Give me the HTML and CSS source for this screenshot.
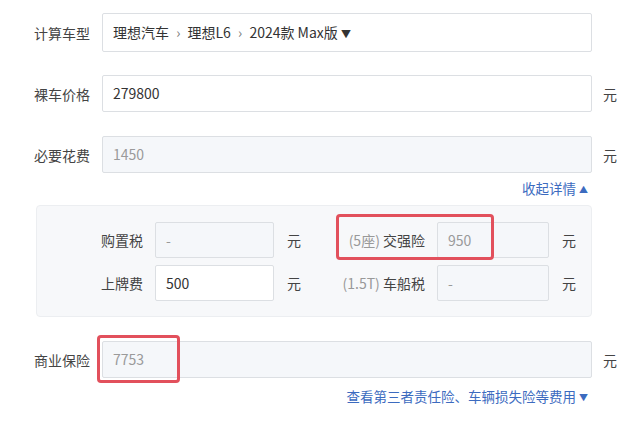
FILE: index.html
```html
<!DOCTYPE html>
<html lang="zh-CN">
<head>
    <meta charset="UTF-8">
    <meta name="viewport" content="width=device-width, initial-scale=1.0">
    <title>购车计算器</title>
    <link rel="stylesheet" href="styles.css">
</head>
<body>
    <div class="calc">
        <div class="row row-first">
            <div class="label">计算车型</div>
            <div class="field">理想汽车 <span class="sep">›</span> 理想L6 <span class="sep">›</span> 2024款 Max版 <span class="caret">▼</span></div>
        </div>

        <div class="row">
            <div class="label">裸车价格</div>
            <div class="field">279800</div>
            <div class="unit">元</div>
        </div>

        <div class="row">
            <div class="label">必要花费</div>
            <div class="field disabled">1450</div>
            <div class="unit">元</div>
        </div>

        <div class="toggle toggle-top">收起详情 <span class="tri">▲</span></div>

        <div class="details">
            <div class="detail-row">
                <div class="group">
                    <div class="sub-label left">购置税</div>
                    <div class="field small disabled">-</div>
                    <div class="unit">元</div>
                </div>
                <div class="group">
                    <div class="sub-label right"><span class="hint">(5座)</span> 交强险</div>
                    <div class="field small narrow disabled">950</div>
                    <div class="unit">元</div>
                </div>
            </div>
            <div class="detail-row detail-row-last">
                <div class="group">
                    <div class="sub-label left">上牌费</div>
                    <div class="field small">500</div>
                    <div class="unit">元</div>
                </div>
                <div class="group">
                    <div class="sub-label right"><span class="hint">(1.5T)</span> 车船税</div>
                    <div class="field small narrow disabled">-</div>
                    <div class="unit">元</div>
                </div>
            </div>
            <div class="mark mark-jq"></div>
        </div>

        <div class="row row-insure">
            <div class="label">商业保险</div>
            <div class="field disabled">7753</div>
            <div class="unit">元</div>
            <div class="mark mark-sy"></div>
        </div>

        <div class="toggle">查看第三者责任险、车辆损失险等费用 <span class="tri">▼</span></div>
    </div>
</body>
</html>
```

FILE: styles.css
```css
body {
    margin: 0;
    background: #fff;
    font-family: "Noto Sans CJK SC", "Noto Sans", sans-serif;
    font-size: 14px;
    line-height: 20px;
    color: #333;
}
.calc {
    width: 640px;
    padding-top: 13px;
}
.row {
    display: flex;
    align-items: center;
    margin-bottom: 24px;
    position: relative;
}
.row-first {
    margin-bottom: 23px;
}
.row-first .field {
    height: 39px;
    line-height: 37px;
}
.label {
    width: 90px;
    padding-right: 12px;
    text-align: right;
    color: #444;
    flex-shrink: 0;
}
.field {
    box-sizing: border-box;
    width: 490px;
    height: 37px;
    line-height: 35px;
    padding-left: 10px;
    border: 1px solid #dcdfe3;
    border-radius: 2px;
    background: #fff;
    color: #333;
    white-space: nowrap;
}
.field.disabled {
    background: #f5f7fa;
    color: #9a9a9a;
}
.sep {
    color: #777;
    margin: 0 4px;
}
.caret {
    font-size: 10px;
    color: #333;
}
.unit {
    margin-left: 11px;
    color: #444;
}
.toggle {
    width: 588px;
    text-align: right;
    color: #3c6bbf;
    font-size: 13.5px;
}
.toggle-top {
    margin-top: -19px;
    margin-bottom: 5px;
}
.tri {
    font-size: 9px;
    vertical-align: 1px;
}
.details {
    box-sizing: border-box;
    width: 556px;
    margin-left: 36px;
    padding: 16px 0 15px;
    background: #f7f8fa;
    border: 1px solid #eceef1;
    border-radius: 4px;
    position: relative;
}
.detail-row {
    display: flex;
    align-items: center;
    margin-bottom: 7px;
}
.detail-row-last {
    margin-bottom: 0;
}
.group {
    display: flex;
    align-items: center;
}
.sub-label {
    text-align: right;
    margin-right: 12px;
    color: #444;
}
.sub-label.left {
    width: 106px;
}
.sub-label.right {
    width: 124px;
}
.hint {
    color: #999;
}
.field.small {
    width: 119px;
    height: 36px;
    line-height: 34px;
}
.field.narrow {
    width: 112px;
}
.group .unit {
    margin-left: 13px;
    width: 14px;
}
.mark {
    position: absolute;
    border: 3px solid #e2505c;
    border-radius: 4px;
    box-sizing: border-box;
}
.mark-jq {
    left: 299px;
    top: 8px;
    width: 158px;
    height: 46px;
}
.row-insure {
    margin-top: 24px;
    margin-bottom: 8px;
}
.mark-sy {
    left: 97px;
    top: -6px;
    width: 83px;
    height: 48px;
}
```
